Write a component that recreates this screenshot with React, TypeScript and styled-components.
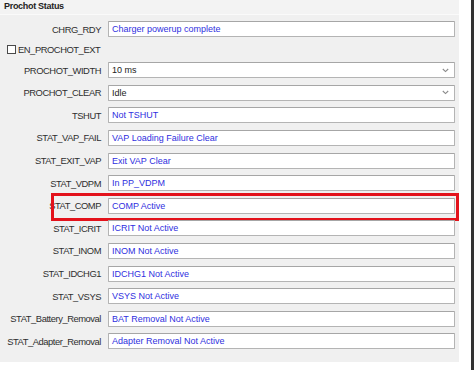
import React from 'react';
import styled, { createGlobalStyle } from 'styled-components';

const GlobalStyle = createGlobalStyle`
  html, body {
    margin: 0;
    padding: 0;
    background: #ffffff;
  }
  body {
    font-family: "Liberation Sans", Arial, sans-serif;
  }
`;

type Row =
  | { kind: 'text'; label: string; value: string; marked?: boolean }
  | { kind: 'select'; label: string; value: string }
  | { kind: 'check'; label: string };

const rows: Row[] = [
  { kind: 'text', label: 'CHRG_RDY', value: 'Charger powerup complete' },
  { kind: 'check', label: 'EN_PROCHOT_EXT' },
  { kind: 'select', label: 'PROCHOT_WIDTH', value: '10 ms' },
  { kind: 'select', label: 'PROCHOT_CLEAR', value: 'Idle' },
  { kind: 'text', label: 'TSHUT', value: 'Not TSHUT' },
  { kind: 'text', label: 'STAT_VAP_FAIL', value: 'VAP Loading Failure Clear' },
  { kind: 'text', label: 'STAT_EXIT_VAP', value: 'Exit VAP Clear' },
  { kind: 'text', label: 'STAT_VDPM', value: 'In PP_VDPM' },
  { kind: 'text', label: 'STAT_COMP', value: 'COMP Active', marked: true },
  { kind: 'text', label: 'STAT_ICRIT', value: 'ICRIT Not Active' },
  { kind: 'text', label: 'STAT_INOM', value: 'INOM Not Active' },
  { kind: 'text', label: 'STAT_IDCHG1', value: 'IDCHG1 Not Active' },
  { kind: 'text', label: 'STAT_VSYS', value: 'VSYS Not Active' },
  { kind: 'text', label: 'STAT_Battery_Removal', value: 'BAT Removal Not Active' },
  { kind: 'text', label: 'STAT_Adapter_Removal', value: 'Adapter Removal Not Active' },
];

const App = () => {
  return (
    <Page>
      <GlobalStyle />
      <Panel>
        <PanelHeader>Prochot Status</PanelHeader>
        <RowList>
          {rows.map((row) =>
            row.kind === 'check' ? (
              <CheckRow key={row.label}>
                <CheckBox />
                <CheckLabel>{row.label}</CheckLabel>
              </CheckRow>
            ) : (
              <FieldRow key={row.label}>
                <FieldLabel>{row.label}</FieldLabel>
                <Field>
                  <FieldValue $select={row.kind === 'select'}>{row.value}</FieldValue>
                  {row.kind === 'select' && (
                    <Chevron width="7" height="5" viewBox="0 0 7 5">
                      <polyline points="0.8,1 3.5,3.6 6.2,1" fill="none" stroke="#8a8a8a" strokeWidth="1.1" />
                    </Chevron>
                  )}
                </Field>
                {row.kind === 'text' && row.marked && <Highlight />}
              </FieldRow>
            )
          )}
        </RowList>
      </Panel>
      <Gutter />
      <Edge />
    </Page>
  );
};

export default App;

const Page = styled.div`
  display: flex;
  height: 373px;
  width: 474px;
  overflow: hidden;
`;

const Panel = styled.div`
  width: 459px;
  height: 362px;
  background: #f0f0f0;
  display: flex;
  flex-direction: column;
`;

const PanelHeader = styled.div`
  height: 14px;
  padding-left: 4px;
  background: #f3f3f3;
  border-bottom: 1px solid #fafafa;
  font-size: 9px;
  font-weight: bold;
  letter-spacing: -0.3px;
  line-height: 13px;
  color: #222222;
`;

const RowList = styled.div`
  display: flex;
  flex-direction: column;
  gap: 6.6px;
  padding: 6px 4px 0 0;
`;

const FieldRow = styled.div`
  position: relative;
  display: grid;
  grid-template-columns: 101px 1fr;
  column-gap: 7px;
  align-items: center;
  height: 16px;
`;

const FieldLabel = styled.span`
  text-align: right;
  font-size: 9.4px;
  letter-spacing: -0.45px;
  color: #2e2e2e;
  white-space: nowrap;
`;

const Field = styled.div`
  display: flex;
  align-items: center;
  height: 16px;
  box-sizing: border-box;
  background: #ffffff;
  border: 1px solid #b4b4b4;
  border-top-color: #a6a6a6;
  border-radius: 1px;
  padding: 0 5px 0 3px;
`;

const FieldValue = styled.span<{ $select: boolean }>`
  flex: 1;
  font-size: 9px;
  color: ${({ $select }) => ($select ? '#222222' : '#2f2fe0')};
  white-space: nowrap;
`;

const Chevron = styled.svg`
  display: block;
`;

const Highlight = styled.div`
  position: absolute;
  left: 51px;
  right: -4px;
  top: -5px;
  bottom: -7px;
  border: 3px solid #e3121b;
  pointer-events: none;
`;

const CheckRow = styled.div`
  display: flex;
  align-items: center;
  gap: 2px;
  height: 12px;
  padding-left: 7px;
`;

const CheckBox = styled.span`
  width: 9px;
  height: 9px;
  box-sizing: border-box;
  background: #ffffff;
  border: 1px solid #4a4a4a;
`;

const CheckLabel = styled.span`
  font-size: 9.4px;
  letter-spacing: -0.45px;
  color: #2e2e2e;
`;

const Gutter = styled.div`
  width: 12px;
  background: #ffffff;
`;

const Edge = styled.div`
  width: 3px;
  height: 370px;
  background: #333333;
`;
